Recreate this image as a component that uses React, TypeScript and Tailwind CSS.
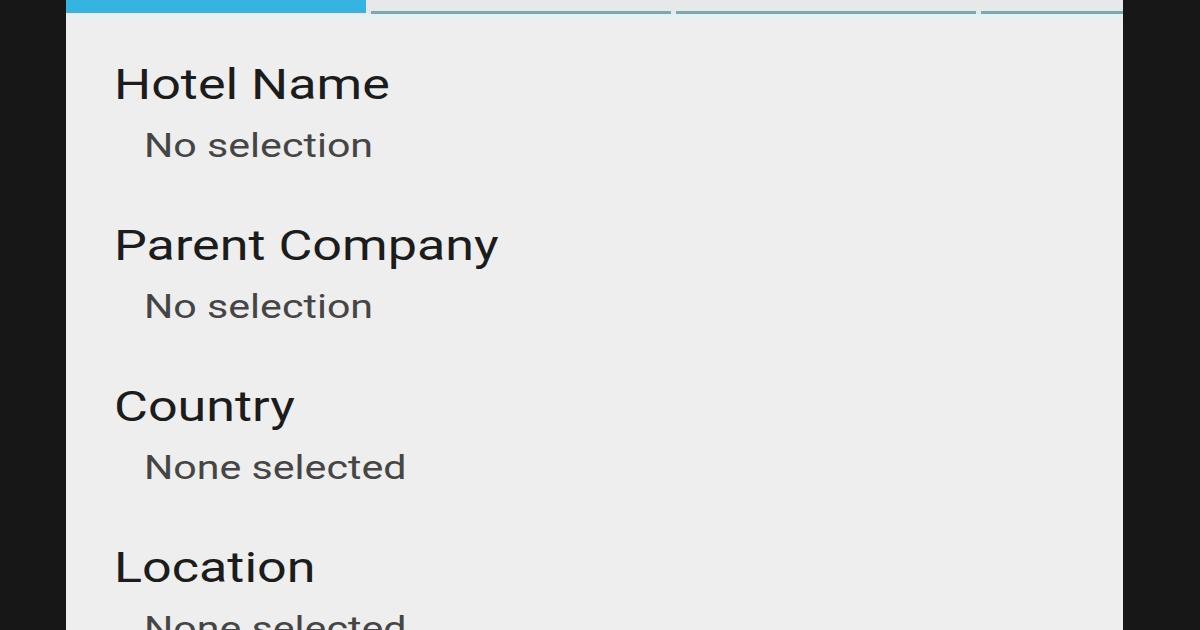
const TABS = [true, false, false, false];

const FIELDS = [
  { label: "Hotel Name", value: "No selection" },
  { label: "Parent Company", value: "No selection" },
  { label: "Country", value: "None selected" },
  { label: "Location", value: "None selected" },
];

export default function App() {
  return (
    <div className="w-[1200px] h-[630px] overflow-hidden bg-[#171717] flex font-['Roboto',sans-serif]">
      <div className="ml-[66px] w-[1057px] h-full bg-[#eeeeee] flex flex-col overflow-hidden">
        {/* tab strip */}
        <div className="flex gap-[5px] h-[14px] shrink-0 bg-[#e6e8ea]">
          {TABS.map((sel, i) => (
            <div key={i} className="flex flex-col shrink-0 w-[300px]">
              {sel ? (
                <div className="h-[13px] bg-[#35b3e1]" />
              ) : (
                <>
                  <div className="h-[11px]" />
                  <div className="h-[3px] bg-[#7fa8ae]" />
                </>
              )}
            </div>
          ))}
        </div>
        <div className="h-[8px] shrink-0 bg-gradient-to-b from-[#dff2f7] to-[#eeeeee]" />

        {/* fields */}
        <div className="flex flex-col pl-[48px] pt-[38px]">
          {FIELDS.map((f) => (
            <div key={f.label} className="flex flex-col items-start h-[161px] shrink-0">
              <div className="origin-left scale-x-[1.24] text-[42px] leading-[50px] text-[#1c1c1c] whitespace-nowrap">
                {f.label}
              </div>
              <div className="origin-left scale-x-[1.21] mt-[15px] ml-[30px] text-[34px] leading-[40px] text-[#454545] whitespace-nowrap">
                {f.value}
              </div>
            </div>
          ))}
        </div>
      </div>
    </div>
  );
}
